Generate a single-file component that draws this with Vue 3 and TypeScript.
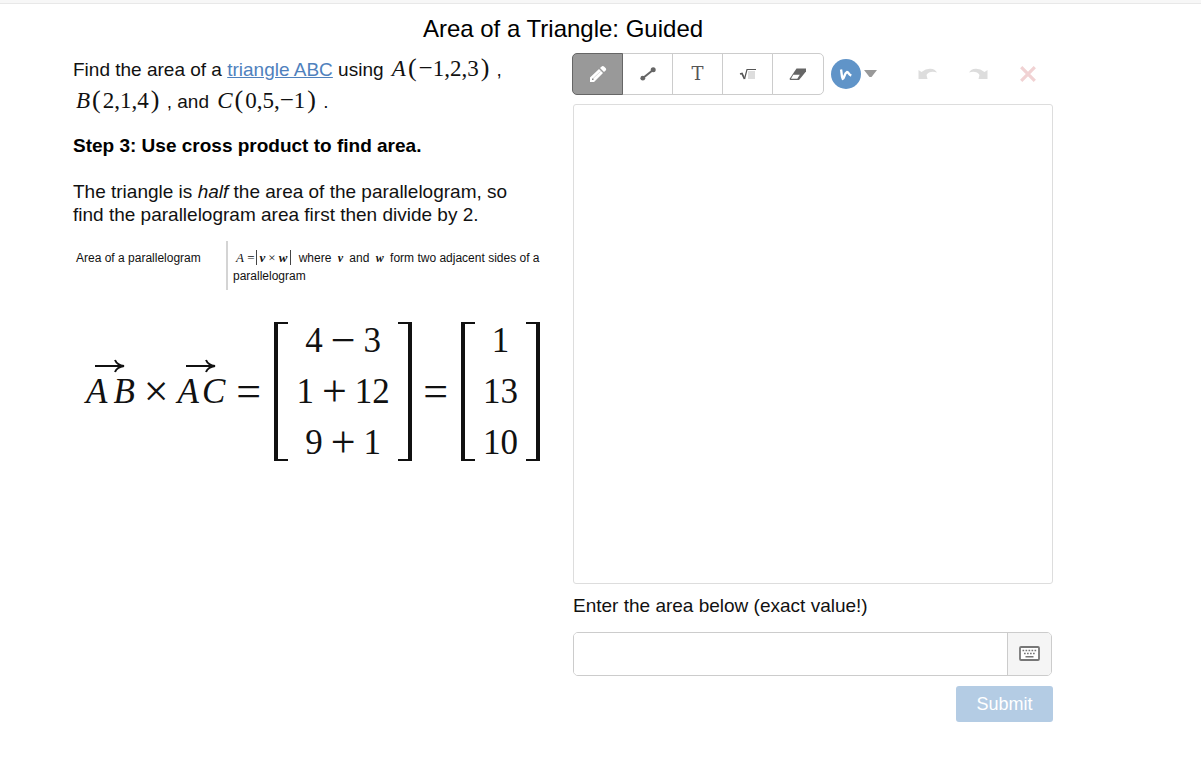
<script setup lang="ts">
import { ref } from 'vue'

type Tool = 'pencil' | 'line' | 'text' | 'formula' | 'eraser'

const tools: { id: Tool; label: string }[] = [
  { id: 'pencil', label: 'Draw' },
  { id: 'line', label: 'Line' },
  { id: 'text', label: 'Text' },
  { id: 'formula', label: 'Formula' },
  { id: 'eraser', label: 'Eraser' },
]
const activeTool = ref<Tool>('pencil')
const answer = ref('')

const sums: string[][] = [
  ['4', '−', '3'],
  ['1', '+', '12'],
  ['9', '+', '1'],
]
const totals: string[] = ['1', '13', '10']
const isOperator = (term: string): boolean => term === '−' || term === '+'
</script>

<template>
  <div class="page">
    <div class="strip"></div>
    <main class="content">
      <h1>Area of a Triangle: Guided</h1>
      <div class="columns">
        <section class="lesson">
          <p class="problem">
            Find the area of a <a href="#triangle">triangle ABC</a> using
            <span class="math"><i>A</i><b>(</b><span class="minus">−</span>1,2,3<b>)</b></span> ,<br />
            <span class="math"><i>B</i><b>(</b>2,1,4<b>)</b></span> , and
            <span class="math"><i>C</i><b>(</b>0,5,<span class="minus">−</span>1<b>)</b></span> .
          </p>
          <h2>Step 3: Use cross product to find area.</h2>
          <p class="explain">
            The triangle is <em>half</em> the area of the parallelogram, so find the parallelogram
            area first then divide by 2.
          </p>
          <div class="rule">
            <div class="rule-name">Area of a parallelogram</div>
            <div class="rule-text">
              <span class="formula"><i>A</i> =<span class="bars"><i class="vec">v</i>×<i class="vec">w</i></span></span>
              where <i class="vec">v</i> and <i class="vec">w</i> form two adjacent sides of a
              parallelogram
            </div>
          </div>
          <div class="equation">
            <div class="vector">
              <svg width="30" height="14" viewBox="0 0 30 14"><path d="M0 7H29M20 1Q22 6 29 7Q22 8 20 13" /></svg>
              <span class="letters"><i>A</i><i>B</i></span>
            </div>
            <span class="operator">×</span>
            <div class="vector">
              <svg width="30" height="14" viewBox="0 0 30 14"><path d="M0 7H29M20 1Q22 6 29 7Q22 8 20 13" /></svg>
              <span class="letters tight"><i>A</i><i>C</i></span>
            </div>
            <span class="operator equals">=</span>
            <div class="matrix sums">
              <div v-for="(row, r) in sums" :key="r" class="row">
                <span v-for="(term, t) in row" :key="t" :class="{ operator: isOperator(term) }">{{ term }}</span>
              </div>
            </div>
            <span class="operator equals">=</span>
            <div class="matrix totals">
              <div v-for="total in totals" :key="total" class="row">{{ total }}</div>
            </div>
          </div>
        </section>

        <section class="work">
          <div class="toolbar">
            <div class="tools">
              <button
                v-for="tool in tools"
                :key="tool.id"
                type="button"
                :class="{ active: tool.id === activeTool }"
                :aria-label="tool.label"
                @click="activeTool = tool.id"
              >
                <svg v-if="tool.id === 'pencil'" width="18" height="18" viewBox="0 0 18 18">
                  <path fill="#fff" d="M1 17V12.500L10 4L14 8L5 17ZM11 3L13 1.300Q14 0.600 15 1.400L16.800 3.200Q17.600 4.200 16.900 5.200L15 7Z" />
                  <path fill="none" stroke="#ccc" stroke-width="0.700" d="M4 13.500L11.500 6.500" />
                  <rect fill="#888" x="3" y="13.500" width="1.500" height="1.500" />
                </svg>
                <svg v-else-if="tool.id === 'line'" width="16" height="14" viewBox="0 0 16 14">
                  <path stroke="#666" stroke-width="2" d="M3 11L13 3" />
                  <circle fill="#666" cx="2.800" cy="11.200" r="2.400" />
                  <circle fill="#666" cx="13.200" cy="2.800" r="2.500" />
                </svg>
                <span v-else-if="tool.id === 'text'" class="glyph">T</span>
                <svg v-else-if="tool.id === 'formula'" width="18" height="14" viewBox="0 0 18 14">
                  <rect fill="#ddd" x="9" y="4" width="7" height="8" />
                  <path fill="none" stroke="#555" stroke-width="1.200" d="M5.500 12L8 2.500H17" />
                  <path fill="none" stroke="#555" stroke-width="1.800" d="M1 7L3 6.500L5.500 12" />
                </svg>
                <svg v-else width="18" height="14" viewBox="0 0 18 14">
                  <path fill="#666" d="M7.500 1.500H17V4.500L10 13H1.500Q0.300 13 0.800 11.500Z" />
                  <path fill="#fff" d="M4.300 7.800H10.800L8.300 11.800H2Z" />
                </svg>
              </button>
            </div>
            <button type="button" class="color" aria-label="Stroke color">
              <span class="swatch">
                <svg width="14" height="13" viewBox="0 0 14 13">
                  <path d="M2 1.500C2.800 4 2.200 8 3.800 10.800C5.500 10.500 5 5.500 8 4C9.800 4 9 6.500 12.300 7.500" />
                </svg>
              </span>
              <svg width="13" height="9" viewBox="0 0 13 9"><path fill="#999" d="M0 0H13L7.500 7H5.500Z" /></svg>
            </button>
            <div class="history">
              <button type="button" aria-label="Undo">
                <svg width="20" height="12" viewBox="0 0 20 12"><path fill="#ddd" d="M0.500 2L3.500 4Q8 0.500 12.500 0.800Q17 1 19 4.500Q14.500 3 11 4.500Q9 5.500 8.500 7L9.500 11H0.500Z" /></svg>
              </button>
              <button type="button" aria-label="Redo">
                <svg width="20" height="12" viewBox="0 0 20 12"><path fill="#ddd" d="M19.500 2L16.500 4Q12 0.500 7.500 0.800Q3 1 1 4.500Q5.500 3 9 4.500Q11 5.500 11.500 7L10.500 11H19.500Z" /></svg>
              </button>
              <button type="button" aria-label="Clear">
                <svg width="16" height="16" viewBox="0 0 16 16"><path stroke="#f1d2d3" stroke-width="3.200" d="M1.200 1.200L14.800 14.800M14.800 1.200L1.200 14.800" /></svg>
              </button>
            </div>
          </div>
          <div class="sketch"></div>
          <label for="area">Enter the area below (exact value!)</label>
          <div class="answer">
            <input id="area" v-model="answer" type="text" autocomplete="off" />
            <button type="button" aria-label="Open keyboard">
              <svg width="21" height="16" viewBox="0 0 21 16">
                <rect x="1" y="1" width="19" height="13" rx="1" fill="#fff" stroke="#777" stroke-width="1.800" />
                <path stroke="#777" stroke-width="1.600" stroke-dasharray="1.700 1.300" d="M3.500 4.500H18M5 7.500H17" />
                <path stroke="#777" stroke-width="1.600" d="M6.500 10.700H14.500" />
              </svg>
            </button>
          </div>
          <button type="button" class="submit">Submit</button>
        </section>
      </div>
    </main>
  </div>
</template>

<style>
body {
  margin: 0;
  background: #fff;
}
</style>

<style scoped>
.page {
  font-family: "Liberation Sans", Arial, sans-serif;
  font-size: 19px;
  color: #111;
}
.strip {
  height: 3px;
  background: #f7f7f7;
  border-bottom: 1px solid #e8e8e8;
}
.content {
  padding: 11px 148px 40px 73px;
}
h1 {
  margin: 0;
  font-size: 24px;
  line-height: 28px;
  font-weight: 400;
  text-align: center;
  color: #000;
}
.columns {
  display: grid;
  grid-template-columns: 1fr 1fr;
  gap: 20px;
  padding-top: 10px;
}
.lesson {
  padding-top: 1px;
}
p {
  margin: 0;
}
.problem {
  line-height: 32px;
}
.problem a {
  color: #4f81bd;
}
.math {
  font-family: "Liberation Serif", serif;
  font-size: 23px;
  line-height: 24px;
  margin-left: 3px;
}
.math b {
  padding: 0 2px;
  font-weight: 400;
  font-size: 26px;
}
.minus {
  font-size: 25px;
}
h2 {
  margin: 16px 0 0;
  font-size: 19px;
  line-height: 23px;
  color: #000;
}
.explain {
  max-width: 450px;
  margin-top: 23px;
  line-height: 23px;
}
.rule {
  display: flex;
  margin-top: 15px;
  padding-left: 3px;
  font-size: 12px;
  line-height: 18px;
  color: #111;
}
.rule-name {
  width: 150px;
  padding-top: 8px;
}
.rule-text {
  flex: 1;
  padding: 8px 0 5px 5px;
  border-left: 2px solid #d4d4d4;
}
.formula {
  padding: 0 3px;
  font-family: "Liberation Serif", serif;
  font-size: 13px;
}
.vec {
  padding: 0 3px;
  font-family: "Liberation Serif", serif;
  font-weight: 700;
}
.bars {
  margin: 0 1px;
  border: solid #444;
  border-width: 0 1px;
}
.equation {
  display: flex;
  align-items: center;
  margin-top: 32px;
  padding-left: 13px;
  gap: 9px;
  font-family: "Liberation Serif", serif;
  font-size: 35px;
  line-height: 51px;
  color: #111;
}
.operator {
  font-size: 44px;
}
.equals {
  margin-left: 2px;
}
.vector {
  display: flex;
  flex-direction: column;
  align-items: center;
}
.vector svg {
  margin: -7px 0;
  fill: none;
  stroke: #111;
  stroke-width: 2;
}
.letters {
  display: flex;
  gap: 6px;
}
.letters.tight {
  gap: 3px;
}
.matrix {
  box-sizing: border-box;
  height: 139px;
  margin-left: 4px;
  display: flex;
  flex-direction: column;
  justify-content: center;
  background:
    linear-gradient(#111, #111) left top / 14px 2px,
    linear-gradient(#111, #111) left bottom / 14px 2px,
    linear-gradient(#111, #111) right top / 14px 2px,
    linear-gradient(#111, #111) right bottom / 14px 2px;
  background-repeat: no-repeat;
  border: solid #111;
  border-width: 0 4px;
  background-origin: border-box;
}
.sums {
  width: 138px;
}
.totals {
  width: 79px;
}
.row {
  display: flex;
  justify-content: center;
  gap: 8px;
}
.toolbar {
  display: flex;
  align-items: center;
  height: 42px;
}
.work {
  display: flex;
  flex-direction: column;
}
button {
  display: flex;
  align-items: center;
  justify-content: center;
  padding: 0;
  border: 0;
  background: none;
  font-family: inherit;
  cursor: pointer;
}
.tools {
  display: flex;
  margin-left: -1px;
}
.tools button {
  box-sizing: border-box;
  width: 51px;
  height: 42px;
  margin-right: -1px;
  border: 1px solid #ccc;
  background: #fff;
}
.tools button:first-child {
  border-radius: 5px 0 0 5px;
}
.tools button:last-child {
  width: 52px;
  border-radius: 0 5px 5px 0;
}
.tools button.active {
  z-index: 1;
  background: #999;
  border-color: #666;
}
.glyph {
  font-family: "DejaVu Serif", serif;
  font-size: 18px;
  line-height: 20px;
  color: #555;
}
.color {
  gap: 3px;
  margin-left: 8px;
}
.swatch {
  display: flex;
  align-items: center;
  justify-content: center;
  width: 30px;
  height: 30px;
  border-radius: 50%;
  background: #6094c8;
}
.swatch svg {
  fill: none;
  stroke: #fff;
  stroke-width: 2.4;
}
.history {
  display: flex;
  margin-left: auto;
}
.history button {
  width: 50px;
  height: 42px;
}
.sketch {
  box-sizing: border-box;
  height: 480px;
  margin-top: 9px;
  border: 1px solid #ddd;
  border-radius: 3px;
}
label {
  margin-top: 11px;
  line-height: 22px;
}
.answer {
  display: flex;
  height: 42px;
  margin: 15px 1px 0 0;
  border: 1px solid #ccc;
  border-radius: 5px;
  overflow: hidden;
}
.answer input {
  flex: 1;
  min-width: 0;
  padding: 0 12px;
  border: 0;
  outline: 0;
  font: inherit;
}
.answer button {
  width: 44px;
  border-left: 1px solid #ccc;
  background: #f5f5f5;
}
.submit {
  align-self: flex-end;
  width: 97px;
  height: 36px;
  margin-top: 10px;
  border-radius: 3px;
  background: #b4cce4;
  color: #fff;
  font-size: 18px;
}
</style>
